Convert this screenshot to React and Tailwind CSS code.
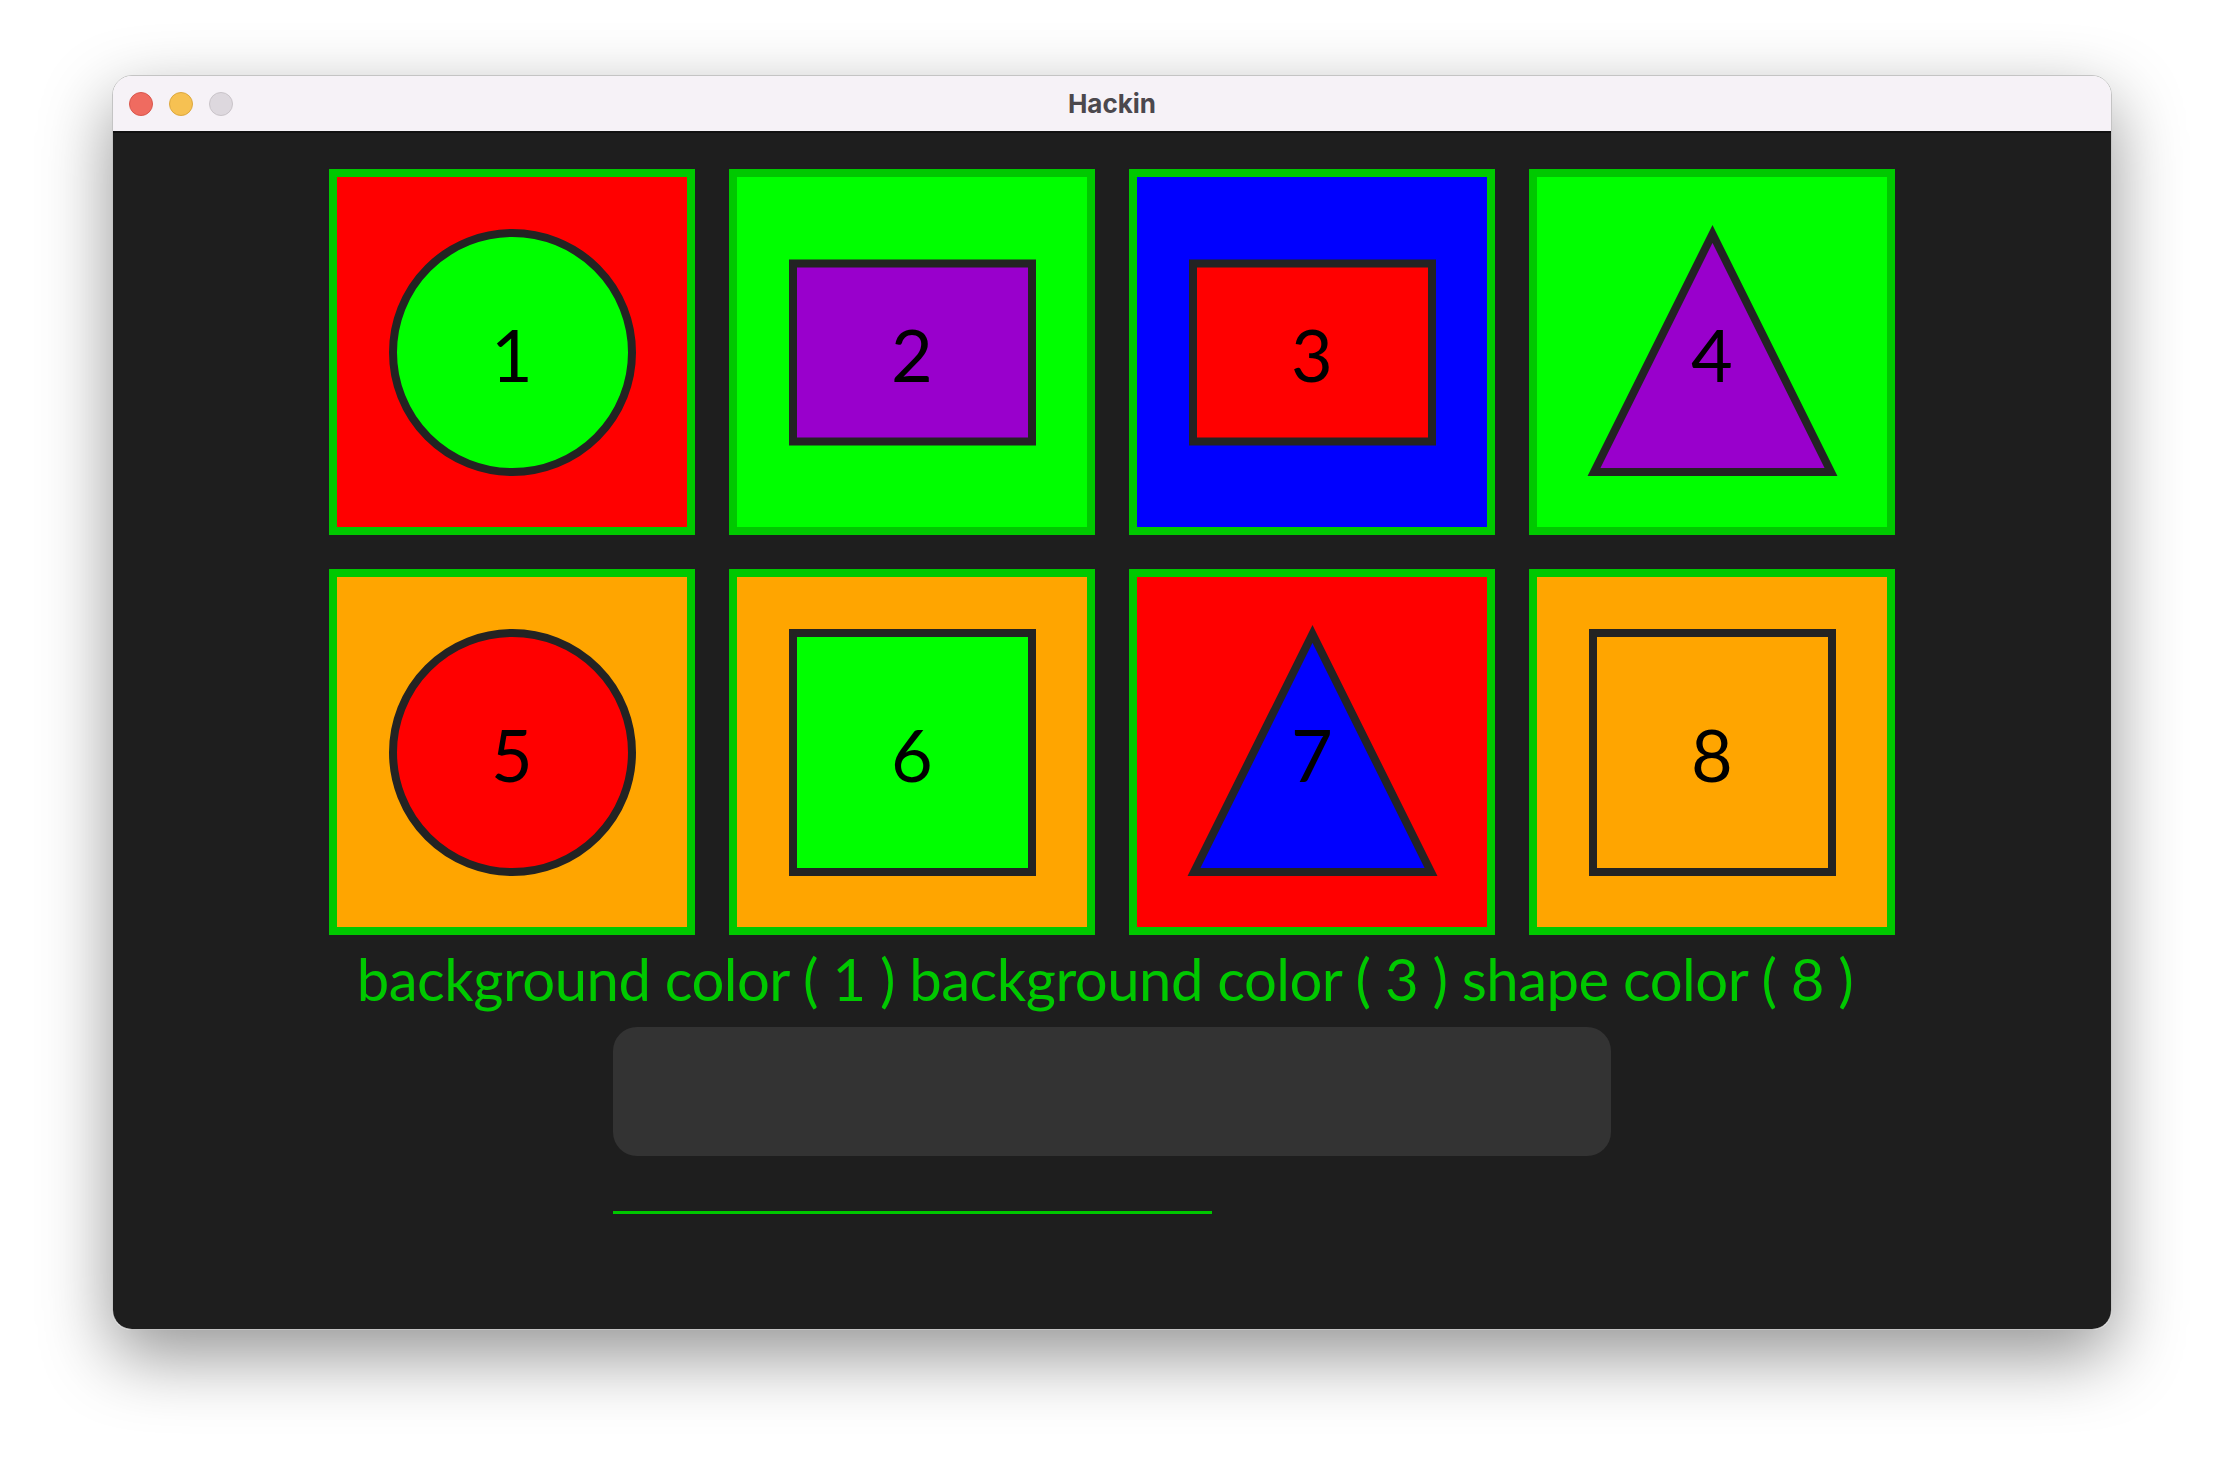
import React from "react";

const STROKE = "#232323";

const tiles = [
  { n: 1, bg: "bg-[#ff0000]", shape: "circle", fill: "#00ff00" },
  { n: 2, bg: "bg-[#00ff00]", shape: "rect", fill: "#9900cc" },
  { n: 3, bg: "bg-[#0000ff]", shape: "rect", fill: "#ff0000" },
  { n: 4, bg: "bg-[#00ff00]", shape: "triangle", fill: "#9900cc" },
  { n: 5, bg: "bg-[#ffa500]", shape: "circle", fill: "#ff0000" },
  { n: 6, bg: "bg-[#ffa500]", shape: "square", fill: "#00ff00" },
  { n: 7, bg: "bg-[#ff0000]", shape: "triangle", fill: "#0000ff" },
  { n: 8, bg: "bg-[#ffa500]", shape: "square", fill: "#ffa500" },
];

function Shape({ shape, fill }) {
  return (
    <svg
      width="247"
      height="247"
      viewBox="0 0 247 247"
      className="col-start-1 row-start-1 overflow-visible"
    >
      {shape === "circle" && (
        <circle cx="123.5" cy="123.5" r="119.5" fill={fill} stroke={STROKE} strokeWidth="8" />
      )}
      {shape === "rect" && (
        <rect x="4" y="34.5" width="239" height="178" fill={fill} stroke={STROKE} strokeWidth="8" />
      )}
      {shape === "square" && (
        <rect x="4" y="4" width="239" height="239" fill={fill} stroke={STROKE} strokeWidth="8" />
      )}
      {shape === "triangle" && (
        <polygon
          points="123.5,5 242,243 5,243"
          fill={fill}
          stroke={STROKE}
          strokeWidth="8"
          strokeLinejoin="miter"
        />
      )}
    </svg>
  );
}

function Tile({ tile }) {
  return (
    <div
      className={`grid h-[366px] w-[366px] place-items-center border-[8px] border-[#00c800] ${tile.bg}`}
    >
      <Shape shape={tile.shape} fill={tile.fill} />
      <span className="col-start-1 row-start-1 pt-[3px] font-['Lato',sans-serif] text-[72px] leading-none text-black">
        {tile.n}
      </span>
    </div>
  );
}

export default function App() {
  return (
    <div className="h-[1480px] w-[2224px] bg-white pl-[112px] pt-[75px]">
      <div className="flex h-[1255px] w-[2000px] flex-col overflow-hidden rounded-[20px] border border-[#c4c4c4] shadow-[0_26px_70px_rgba(0,0,0,0.42)]">
        {/* title bar */}
        <div className="relative flex h-[57px] shrink-0 items-center border-b-2 border-[#111] bg-[#f6f2f7]">
          <div className="flex gap-[16px] pl-[16px]">
            <span className="h-[24px] w-[24px] rounded-full border border-[#d9574d] bg-[#ef6b60]" />
            <span className="h-[24px] w-[24px] rounded-full border border-[#dca83f] bg-[#f6c152]" />
            <span className="h-[24px] w-[24px] rounded-full border border-[#c9c4c9] bg-[#ddd8de]" />
          </div>
          <div className="absolute inset-0 flex items-center justify-center font-['Inter',sans-serif] text-[26px] font-bold text-[#4b484d]">
            Hackin
          </div>
        </div>

        {/* content */}
        <div className="flex flex-1 flex-col items-center bg-[#1e1e1e] pt-[36px]">
          <div className="grid grid-cols-4 gap-[34px]">
            {tiles.map((t) => (
              <Tile key={t.n} tile={t} />
            ))}
          </div>
          <div className="mt-[8px] whitespace-pre pr-[14px] font-['Lato',sans-serif] text-[58px] leading-[72px] tracking-[-0.5px] text-[#00c800]">
            background color ( 1 ) background color ( 3 ) shape color ( 8 )
          </div>
          <div className="mt-[12px] w-[998px]">
            <div className="h-[129px] w-full rounded-[24px] bg-[#333333]" />
            <div className="mt-[55px] h-[3px] w-[60%] bg-[#00c800]" />
          </div>
        </div>
      </div>
    </div>
  );
}
